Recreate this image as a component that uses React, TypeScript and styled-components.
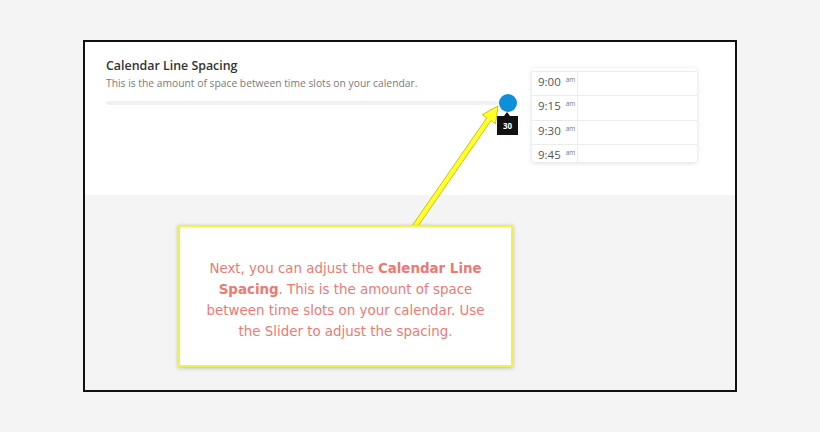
import styled, { createGlobalStyle } from "styled-components";

const GlobalStyle = createGlobalStyle`
  html, body {
    margin: 0;
    padding: 0;
    background: #f4f4f4;
  }
  body {
    width: 820px;
    height: 432px;
    overflow: hidden;
  }
`;

const Frame = styled.div`
  position: relative;
  box-sizing: border-box;
  margin: 40px 0 0 83px;
  width: 654px;
  height: 352px;
  border: 2px solid #111;
  background: #f4f4f4;
  display: flex;
  flex-direction: column;
`;

const Panel = styled.section`
  height: 153px;
  background: #fff;
  display: flex;
  padding: 0 38px 0 21px;
  box-sizing: border-box;
`;

const Settings = styled.div`
  width: 404px;
  padding-top: 15px;
  font-family: "Open Sans", "Liberation Sans", sans-serif;
`;

const Title = styled.h2`
  margin: 0;
  font-size: 12.4px;
  font-weight: 600;
  color: #333;
  line-height: 18px;
`;

const Subtitle = styled.p`
  margin: 1px 0 0;
  font-size: 10.3px;
  color: #7a7a7a;
  line-height: 14px;
`;

const Track = styled.div`
  position: relative;
  margin-top: 11px;
  height: 4px;
  width: 402px;
  background: #f1f1f1;
  border-radius: 2px;
`;

const Knob = styled.div`
  position: absolute;
  right: -9px;
  top: -7px;
  width: 18px;
  height: 18px;
  border-radius: 50%;
  background: #0d8fd9;
`;

const Bubble = styled.div`
  position: absolute;
  left: -2px;
  top: 22px;
  width: 21px;
  height: 19px;
  background: #111;
  color: #fff;
  font-size: 8px;
  font-weight: 700;
  display: flex;
  align-items: center;
  justify-content: center;
  &::before {
    content: "";
    position: absolute;
    top: -4px;
    left: 7px;
    border-left: 3px solid transparent;
    border-right: 3px solid transparent;
    border-bottom: 4px solid #111;
  }
`;

const TimeCard = styled.div`
  margin: 26px 0 0 24px;
  width: 167px;
  height: 94px;
  overflow: hidden;
  background: #fff;
  border-radius: 3px;
  box-shadow: 0 1px 5px rgba(0, 0, 0, 0.14);
  padding-top: 3px;
  box-sizing: border-box;
  font-family: "Open Sans", "Liberation Sans", sans-serif;
`;

const Slot = styled.div`
  display: flex;
  flex-shrink: 0;
  height: 24.3px;
  border-top: 1px solid #ececec;
  box-sizing: border-box;
`;

const TimeLabel = styled.div`
  width: 46px;
  padding: 1px 0 0 6px;
  box-sizing: border-box;
  border-right: 1px solid #ececec;
  font-size: 11.5px;
  color: #555;
  line-height: 13px;
  white-space: nowrap;
  sup {
    font-size: 6.5px;
    margin-left: 5px;
    vertical-align: 4px;
    color: #777;
  }
`;

const SlotArea = styled.div`
  flex: 1;
`;

const Lower = styled.div`
  flex: 1;
  padding: 30px 0 0 93px;
`;

const Callout = styled.div`
  position: relative;
  z-index: 1;
  box-sizing: border-box;
  width: 335px;
  height: 142px;
  background: #fff;
  border: 2px solid #f2f24a;
  box-shadow: 0 1px 4px rgba(0, 0, 0, 0.25);
  display: flex;
  align-items: center;
  justify-content: center;
  padding: 8px 16px 0;
  text-align: center;
  font-family: "DejaVu Sans", Verdana, sans-serif;
  font-size: 13.4px;
  line-height: 21px;
  color: #ec7a72;
  b {
    font-weight: 700;
  }
`;

const ArrowLayer = styled.svg`
  position: absolute;
  left: -2px;
  top: -2px;
  pointer-events: none;
`;

const slots = ["9:00", "9:15", "9:30", "9:45"];

export default function App() {
  return (
    <>
      <GlobalStyle />
      <Frame>
        <Panel>
          <Settings>
            <Title>Calendar Line Spacing</Title>
            <Subtitle>This is the amount of space between time slots on your calendar.</Subtitle>
            <Track>
              <Knob>
                <Bubble>30</Bubble>
              </Knob>
            </Track>
          </Settings>
          <TimeCard>
            {slots.map((t) => (
              <Slot key={t}>
                <TimeLabel>
                  {t}
                  <sup>am</sup>
                </TimeLabel>
                <SlotArea />
              </Slot>
            ))}
          </TimeCard>
        </Panel>
        <Lower>
          <Callout>
            <div>
              Next, you can adjust the <b>Calendar Line Spacing</b>. This is the amount of space
              between time slots on your calendar. Use the Slider to adjust the spacing.
            </div>
          </Callout>
        </Lower>
        <ArrowLayer width="654" height="352" viewBox="83 40 654 352">
          <polygon
            points="417.1,227.4 491,120.6 495.5,123.8 498,106 482.3,114.6 486.8,117.8 412.9,224.6"
            fill="#ffff2e"
            stroke="#c9c21a"
            strokeWidth="1"
            strokeLinejoin="round"
          />
        </ArrowLayer>
      </Frame>
    </>
  );
}
